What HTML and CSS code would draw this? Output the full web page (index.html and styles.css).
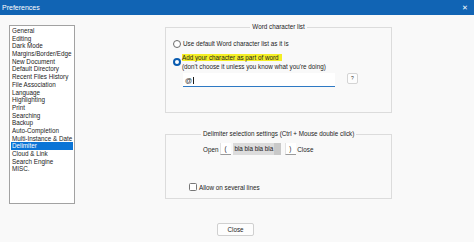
FILE: index.html
```html
<!DOCTYPE html>
<html lang="en">
<head>
    <meta charset="UTF-8">
    <title>Preferences</title>
    <link rel="stylesheet" href="styles.css">
</head>
<body>
    <div class="window">
        <div class="titlebar">
            <span class="title">Preferences</span>
            <span class="close-x">&#x2715;</span>
        </div>

        <div class="content">
            <ul class="pages">
                <li>General</li>
                <li>Editing</li>
                <li>Dark Mode</li>
                <li>Margins/Border/Edge</li>
                <li>New Document</li>
                <li>Default Directory</li>
                <li>Recent Files History</li>
                <li>File Association</li>
                <li>Language</li>
                <li>Highlighting</li>
                <li>Print</li>
                <li>Searching</li>
                <li>Backup</li>
                <li>Auto-Completion</li>
                <li>Multi-Instance &amp; Date</li>
                <li class="selected">Delimiter</li>
                <li>Cloud &amp; Link</li>
                <li>Search Engine</li>
                <li>MISC.</li>
            </ul>

            <div class="panel">
                <fieldset class="group group-word">
                    <legend>Word character list</legend>
                    <label class="option option-default">
                        <span class="radio"></span>
                        <span>Use default Word character list as it is</span>
                    </label>
                    <label class="option option-custom">
                        <span class="radio checked"></span>
                        <span class="option-text"><span class="hl">Add your character as part of word</span><br>(don't choose it unless you know what you're doing)</span>
                    </label>
                    <div class="char-row">
                        <div class="char-input">@<span class="caret"></span></div>
                        <button class="help">?</button>
                    </div>
                </fieldset>

                <fieldset class="group group-delim">
                    <legend>Delimiter selection settings (Ctrl + Mouse double click)</legend>
                    <div class="delim-row">
                        <span>Open</span>
                        <span class="delim-field">(</span>
                        <span class="sample">bla bla bla bla</span>
                        <span class="delim-field">)</span>
                        <span>Close</span>
                    </div>
                    <label class="check-row">
                        <span class="checkbox"></span>
                        <span>Allow on several lines</span>
                    </label>
                </fieldset>
            </div>
        </div>

        <div class="footer">
            <button class="close-btn">Close</button>
        </div>
    </div>
</body>
</html>
```

FILE: styles.css
```css
body {
    margin: 0;
    padding: 0;
    font-family: "Liberation Sans", Arial, sans-serif;
    font-size: 6.3px;
    color: #1b1b1b;
    background-color: #f9f9f9;
}

.window {
    width: 474px;
    height: 242px;
    overflow: hidden;
}

.titlebar {
    display: flex;
    justify-content: space-between;
    align-items: center;
    height: 15px;
    padding: 0 6px 0 2px;
    background-color: #1164b4;
    color: #fff;
}

.title {
    font-size: 7px;
}

.close-x {
    font-size: 7px;
}

.content {
    display: flex;
    align-items: flex-start;
    padding: 8px 0 0 9px;
}

.pages {
    list-style-type: none;
    margin: 2px 0 0;
    padding: 1px 1px 0;
    width: 66px;
    height: 178px;
    box-sizing: border-box;
    height: 179px;
    border: 1px solid #a2a2a2;
    background-color: #fff;
}

.pages li {
    line-height: 7.7px;
    height: 7.7px;
    padding-left: 1px;
    white-space: nowrap;
}

.pages li.selected {
    background-color: #0a74d6;
    color: #fff;
}

.panel {
    display: flex;
    flex-direction: column;
    margin-left: 90px;
}

.group {
    margin: 0;
    padding: 0;
    width: 227px;
    box-sizing: border-box;
    border: 1px solid #dcdcdc;
    min-width: 0;
}

.group legend {
    padding: 0 2px;
    line-height: 8px;
}

.group-word {
    height: 90px;
}

.group-word legend {
    margin: 0 auto;
}

.option {
    display: flex;
    align-items: center;
    padding-left: 7px;
    line-height: 8px;
}

.option-default {
    margin-top: 9px;
}

.option-custom {
    margin-top: 4.5px;
    line-height: 9px;
}

.radio {
    width: 8px;
    height: 8px;
    box-sizing: border-box;
    border: 1px solid #6b6b6b;
    border-radius: 50%;
    background-color: #fff;
    margin-right: 2px;
    flex-shrink: 0;
}

.radio.checked {
    border: 2.5px solid #0a5cb0;
    background-color: #fff;
}

.option-custom .radio {
    margin-top: 1px;
    margin-right: 1px;
}

.hl {
    background-color: #f4ef25;
    padding-right: 3px;
}

.char-row {
    display: flex;
    align-items: flex-start;
    margin: 2.5px 0 0 17px;
}

.char-input {
    width: 152px;
    height: 14px;
    box-sizing: border-box;
    padding: 2px 2px 0;
    line-height: 9px;
    background-color: #fff;
    border-bottom: 1.5px solid #2e79c4;
    font-size: 7px;
    display: flex;
    align-items: center;
}

.caret {
    display: inline-block;
    width: 1px;
    height: 7px;
    background-color: #1b1b1b;
    margin-left: 0.5px;
}

.help {
    margin-left: 12px;
    width: 11px;
    height: 11px;
    padding: 0;
    font-family: inherit;
    font-size: 5px;
    line-height: 9px;
    background-color: #fdfdfd;
    border: 1px solid #d4d4d4;
    border-radius: 2px;
    color: #333;
}

.group-delim {
    margin-top: 17px;
    height: 69px;
}

.group-delim legend {
    margin-left: 35px;
}

.delim-row {
    display: flex;
    align-items: center;
    margin: 5px 0 0 37px;
    height: 12px;
}

.delim-field {
    width: 11px;
    height: 12px;
    box-sizing: border-box;
    margin: 0 1px 0 2px;
    padding-left: 3px;
    line-height: 11px;
    background-color: #fff;
    border-left: 1px solid #e2e2e2;
    border-bottom: 1px solid #9a9a9a;
}

.sample {
    height: 12px;
    line-height: 12px;
    padding: 0 8px 0 1px;
    margin: 0 2px 0 1px;
    background: linear-gradient(to right, #dcdcdc 85%, #c8c8c8 85%);
}

.check-row {
    display: flex;
    align-items: center;
    margin: 27.5px 0 0 23px;
    line-height: 9px;
}

.checkbox {
    width: 8px;
    height: 8px;
    box-sizing: border-box;
    border: 1px solid #767676;
    border-radius: 1.5px;
    background-color: #fff;
    margin-right: 2px;
}

.footer {
    padding-left: 217px;
    margin-top: 19px;
}

.close-btn {
    width: 37px;
    height: 13px;
    padding: 0;
    font-family: inherit;
    font-size: 6.3px;
    color: #1b1b1b;
    background-color: #fdfdfd;
    border: 1px solid #d0d0d0;
    border-radius: 2px;
}
```
